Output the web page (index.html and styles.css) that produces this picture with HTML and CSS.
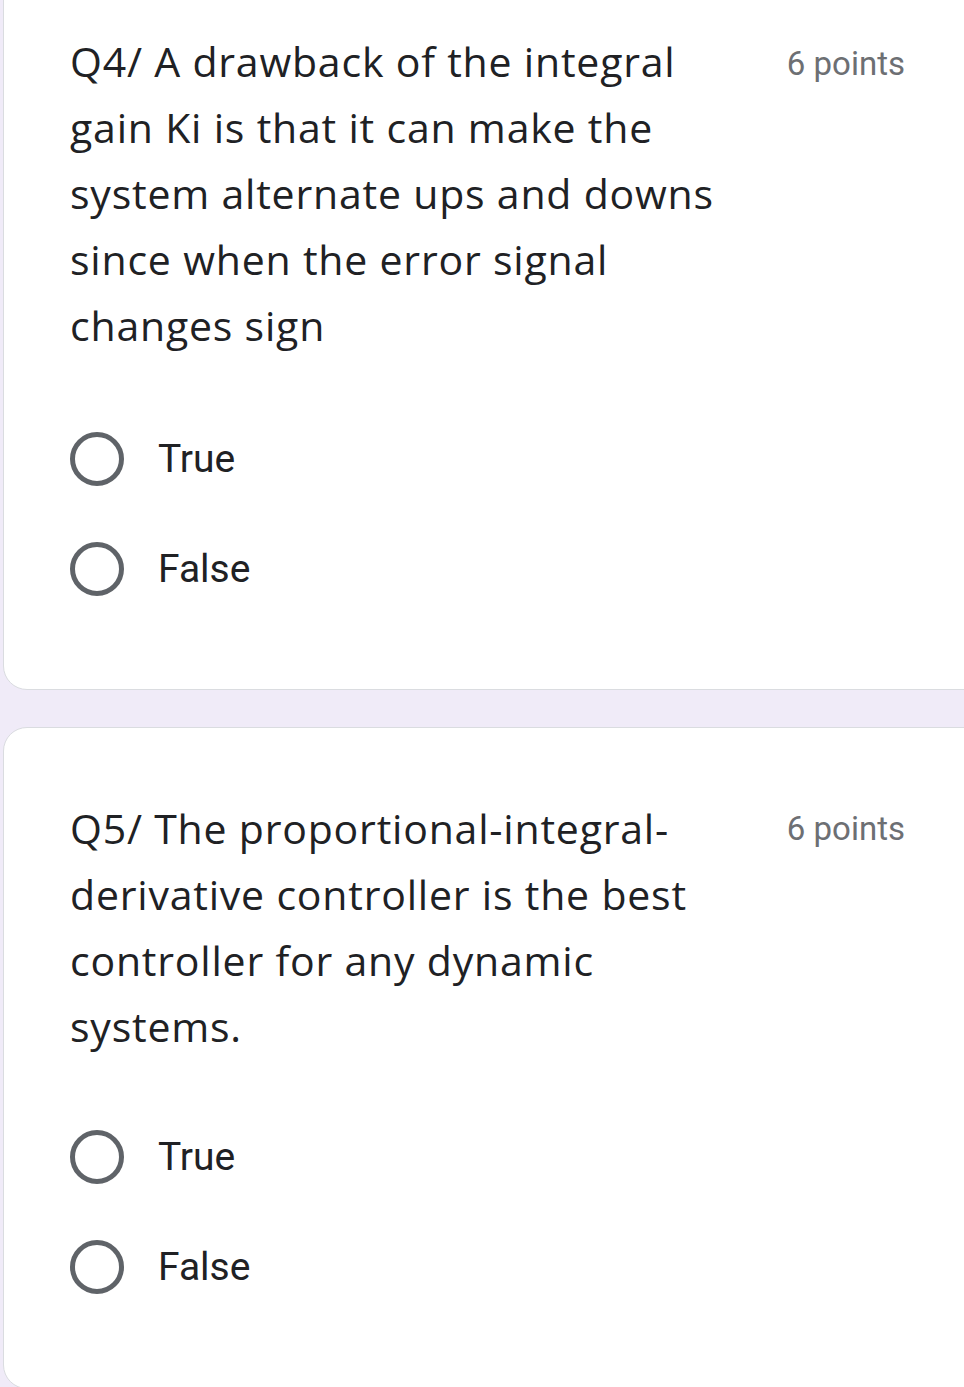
FILE: index.html
```html
<!DOCTYPE html>
<html>
<head>
<meta charset="utf-8">
<link rel="stylesheet" href="styles.css">
</head>
<body>
<div class="form">
  <section class="card card-first">
    <div class="head">
      <div class="question">Q4/ A drawback of the integral gain Ki is that it can make the system alternate ups and downs since when the error signal changes sign</div>
      <div class="points">6 points</div>
    </div>
    <div class="options">
      <label class="option"><span class="radio"></span><span class="label">True</span></label>
      <label class="option"><span class="radio"></span><span class="label">False</span></label>
    </div>
  </section>
  <section class="card card-second">
    <div class="head">
      <div class="question">Q5/ The proportional-integral-derivative controller is the best controller for any dynamic systems.</div>
      <div class="points">6 points</div>
    </div>
    <div class="options">
      <label class="option"><span class="radio"></span><span class="label">True</span></label>
      <label class="option"><span class="radio"></span><span class="label">False</span></label>
    </div>
  </section>
</div>
</body>
</html>
```
FILE: styles.css
```css
html, body {
  margin: 0;
  padding: 0;
  background: #f0ebf8;
  overflow: hidden;
}
.form {
  display: flex;
  flex-direction: column;
  gap: 37px;
  margin-left: 3px;
  margin-right: -30px;
}
.card {
  background: #fff;
  border: 1px solid #dadce0;
  border-radius: 24px;
  padding: 0 88px 0 66px;
}
.card-first {
  margin-top: -40px;
  padding-top: 67px;
  padding-bottom: 93px;
}
.card-first .options {
  margin-top: 74px;
}
.card-first .points {
  padding-top: 3px;
}
.card-second {
  padding-top: 67px;
  padding-bottom: 94px;
}
.card-second .points {
  padding-top: 1px;
}
.head {
  display: flex;
  justify-content: space-between;
  align-items: flex-start;
  gap: 20px;
}
.question {
  font-family: "Open Sans", sans-serif;
  font-size: 41px;
  letter-spacing: 0.8px;
  line-height: 66px;
  color: #202124;
  width: 672px;
}
.points {
  flex-shrink: 0;
  font-family: Roboto, sans-serif;
  font-size: 33px;
  line-height: 66px;
  color: #6d6f73;
}
.options {
  display: flex;
  flex-direction: column;
  gap: 56px;
  margin-top: 71px;
}
.option {
  display: flex;
  align-items: center;
  gap: 34px;
  height: 54px;
}
.radio {
  width: 44px;
  height: 44px;
  border: 5px solid #5f6368;
  border-radius: 50%;
  flex-shrink: 0;
}
.label {
  font-family: Roboto, sans-serif;
  font-size: 39px;
  color: #202124;
}
```
